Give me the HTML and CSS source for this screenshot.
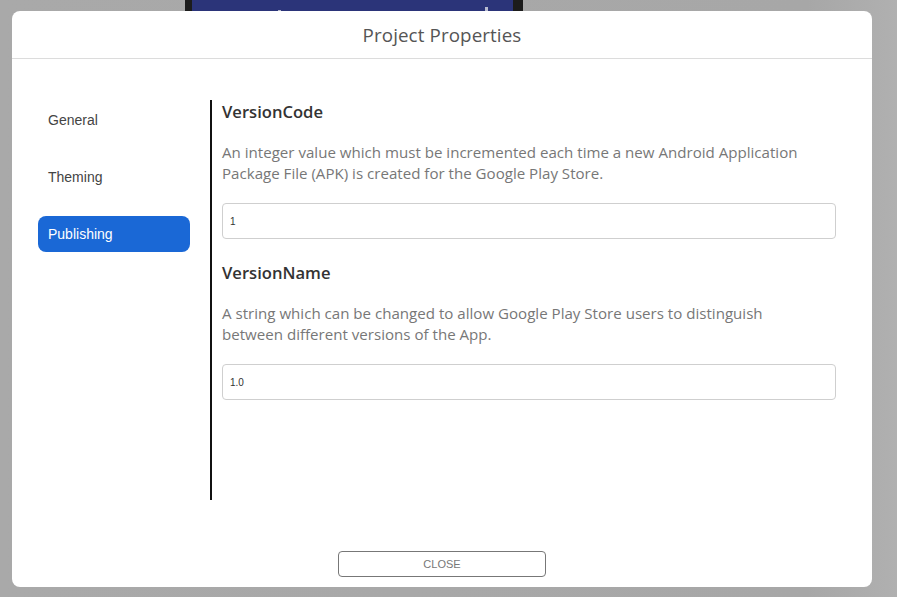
FILE: index.html
```html
<!DOCTYPE html>
<html lang="en">
<head>
<meta charset="utf-8">
<title>Project Properties</title>
<link rel="stylesheet" href="styles.css">
</head>
<body>
<div class="backdrop-phone">
  <div class="phone-screen">
    <span class="dot dot-a"></span>
    <span class="dot dot-b"></span>
  </div>
</div>
<div class="modal">
  <header class="modal-header">
    <h1 class="modal-title">Project Properties</h1>
  </header>
  <div class="modal-body">
    <nav class="sidebar">
      <div class="side-item">General</div>
      <div class="side-item">Theming</div>
      <div class="side-item active">Publishing</div>
    </nav>
    <section class="content">
      <div class="field">
        <h2 class="field-title">VersionCode</h2>
        <p class="field-desc">An integer value which must be incremented each time a new Android Application Package File (APK) is created for the Google Play Store.</p>
        <input class="field-input" type="text" value="1">
      </div>
      <div class="field">
        <h2 class="field-title">VersionName</h2>
        <p class="field-desc">A string which can be changed to allow Google Play Store users to distinguish between different versions of the App.</p>
        <input class="field-input" type="text" value="1.0">
      </div>
    </section>
  </div>
  <footer class="modal-footer">
    <button class="close-btn" type="button">CLOSE</button>
  </footer>
</div>
</body>
</html>
```
FILE: styles.css
```css
* { box-sizing: border-box; }

html, body {
  margin: 0;
  padding: 0;
}

body {
  width: 897px;
  height: 597px;
  overflow: hidden;
  background: linear-gradient(90deg, #a9a9a9 0%, #a7a7a7 90%, #b0b0b0 100%);
  font-family: "Liberation Sans", Arial, sans-serif;
  position: relative;
  padding: 11px 0 0 12px;
}

.backdrop-phone {
  position: absolute;
  left: 185px;
  top: -20px;
  width: 338px;
  height: 300px;
  background: #1c1c1c;
  border-radius: 10px;
  padding: 0 10px 0 7px;
}

.phone-screen {
  position: relative;
  height: 100%;
  background: #2b3479;
}

.dot {
  position: absolute;
  width: 3px;
  height: 3px;
  background: #b8bbd0;
}
.dot-a { left: 86px; top: 30px; }
.dot-b { left: 293px; top: 27px; height: 4px; }

.modal {
  position: relative;
  width: 860px;
  height: 576px;
  background: #fff;
  border-radius: 8px;
  display: flex;
  flex-direction: column;
}

.modal-header {
  height: 48px;
  border-bottom: 1px solid #dcdcdc;
  display: flex;
  align-items: center;
  justify-content: center;
}

.modal-title {
  margin: 0;
  font-family: "Open Sans", sans-serif;
  font-size: 18.8px;
  font-weight: 500;
  color: #555;
  letter-spacing: 0.1px;
}

.modal-body {
  display: flex;
  padding: 41px 0 0 26px;
}

.sidebar {
  width: 152px;
  margin-right: 20px;
  padding-top: 2px;
  display: flex;
  flex-direction: column;
  gap: 21px;
}

.side-item {
  height: 36px;
  line-height: 36px;
  padding-left: 10px;
  font-size: 14px;
  color: #444;
  border-radius: 8px;
}

.side-item.active {
  background: #1a68d6;
  color: #fff;
}

.content {
  height: 400px;
  border-left: 2px solid #111;
  padding-left: 10px;
  width: 626px;
}

.field + .field {
  margin-top: 22px;
}

.field-title {
  margin: 0;
  font-family: "Open Sans", sans-serif;
  font-size: 16.6px;
  line-height: 24px;
  font-weight: 600;
  color: #333;
}

.field-desc {
  margin: 18px 0 0;
  max-width: 590px;
  font-family: "Open Sans", sans-serif;
  font-size: 15.1px;
  line-height: 21px;
  color: #777;
}

.field-input {
  display: block;
  margin-top: 19px;
  width: 614px;
  height: 36px;
  border: 1px solid #cfcfcf;
  border-radius: 4px;
  padding: 0 7px;
  font-family: "Liberation Sans", Arial, sans-serif;
  font-size: 10px;
  color: #333;
  outline: none;
}

.modal-footer {
  margin-top: 51px;
  display: flex;
  justify-content: center;
}

.close-btn {
  width: 208px;
  height: 26px;
  border: 1px solid #777;
  border-radius: 4px;
  background: #fff;
  font-family: "Liberation Sans", Arial, sans-serif;
  font-size: 11px;
  color: #777;
  padding: 0;
}
```
